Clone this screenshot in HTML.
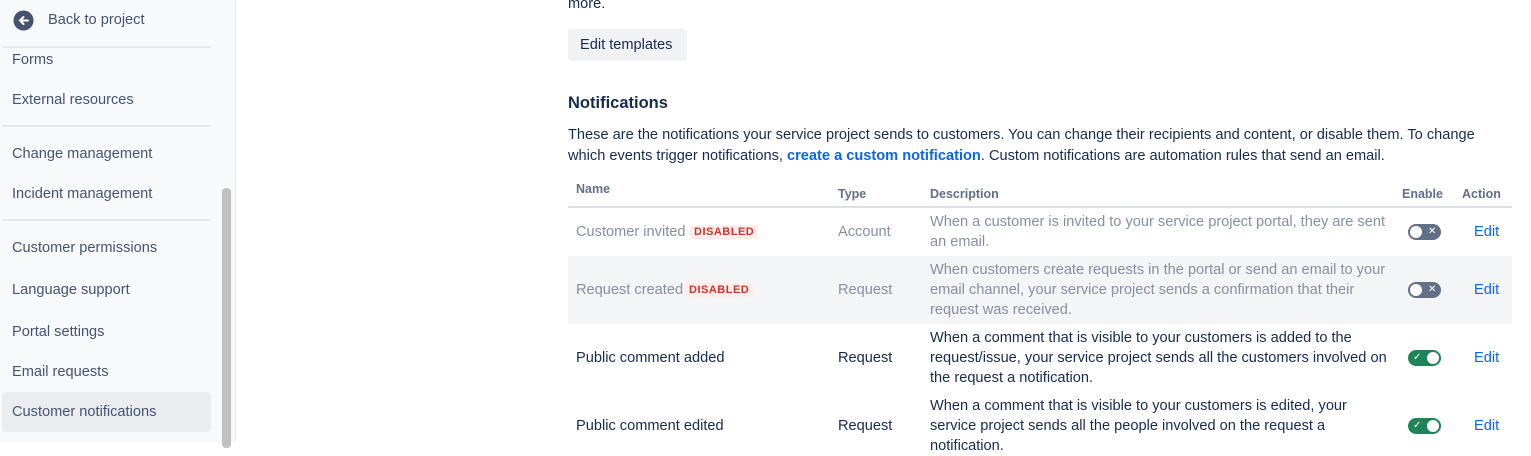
<!DOCTYPE html>
<html><head><style>
*{margin:0;padding:0;box-sizing:border-box}
body{width:1531px;height:441px;overflow:hidden;background:#fff;font-family:"Liberation Sans",sans-serif;font-size:14.6px;color:#172b4d;position:relative}
.w{position:absolute;left:0;top:1px;width:1531px;height:441px}
.sb{position:absolute;left:0;top:-1px;width:236px;height:442px;background:#f8f9fb;border-right:1px solid #e4e6ea}
.it{position:absolute;left:12px;color:#44546f;top:0}
.sep{position:absolute;left:2px;width:209px;height:2px;background:#e8e9ec}
.sel{position:absolute;left:2px;top:392px;width:209px;height:40px;background:#ebecf0;border-radius:3px}
.scr{position:absolute;left:222px;top:188px;width:9px;height:260px;background:#c1c1c1;border-radius:4px}
.m{position:absolute;left:568px}
.desc{position:absolute;left:930px;width:462px;line-height:20px}
.tg{position:absolute;left:1408px;width:33px;height:16px;border-radius:8px}
.tg i{position:absolute;top:2px;width:12px;height:12px;border-radius:50%;background:#fff}
.tg span{position:absolute;top:0;line-height:16px;color:#fff;font-size:10px}
.ed{position:absolute;left:1474px;color:#0c66e4}
.lz{position:absolute;font-size:11px;font-weight:bold;color:#c9372c;background:#ffeceb;padding:1px 4px;border-radius:3px;letter-spacing:.5px}
</style></head><body><div class="w">
<div class="sb">
<svg style="position:absolute;left:13px;top:10px" width="21" height="21" viewBox="0 0 21 21"><circle cx="10.5" cy="10.5" r="10" fill="#44546f"/><path d="M15 10.5H7M10.5 7l-3.5 3.5 3.5 3.5" stroke="#fff" stroke-width="2" fill="none" stroke-linecap="round"/></svg>
<div class="it" style="left:48px;top:12px">Back to project</div>
<div class="sep" style="top:46px"></div>
<div class="it" style="top:52px">Forms</div>
<div class="it" style="top:92px">External resources</div>
<div class="sep" style="top:125px"></div>
<div class="it" style="top:146px">Change management</div>
<div class="it" style="top:186px">Incident management</div>
<div class="sep" style="top:219px"></div>
<div class="it" style="top:240px">Customer permissions</div>
<div class="it" style="top:282px">Language support</div>
<div class="it" style="top:324px">Portal settings</div>
<div class="it" style="top:364px">Email requests</div>
<div class="sel"></div>
<div class="it" style="top:404px">Customer notifications</div>
<div class="scr"></div>
</div>
<div class="m" style="top:-5px">more.</div>
<div class="m" style="top:28px;width:119px;height:32px;background:#f1f2f4;border-radius:3px;padding:8px 12px;font-weight:500">Edit templates</div>
<div class="m" style="top:93px;font-size:16.5px;font-weight:bold">Notifications</div>
<div class="m" style="top:124px;width:944px;line-height:21px">These are the notifications your service project sends to customers. You can change their recipients and content, or disable them. To change which events trigger notifications, <b style="color:#0c66e4">create a custom notification</b>. Custom notifications are automation rules that send an email.</div>
<div style="position:absolute;left:568px;top:205px;width:944px;height:2px;background:#dcdfe4"></div>
<div style="position:absolute;left:576px;top:181px;font-size:12.5px;font-weight:bold;color:#626f86">Name</div>
<div style="position:absolute;left:838px;top:186px;font-size:12.5px;font-weight:bold;color:#626f86">Type</div>
<div style="position:absolute;left:930px;top:186px;font-size:12.5px;font-weight:bold;color:#626f86">Description</div>
<div style="position:absolute;left:1402px;top:186px;font-size:12.5px;font-weight:bold;color:#626f86">Enable</div>
<div style="position:absolute;left:1462px;top:186px;font-size:12.5px;font-weight:bold;color:#626f86">Action</div>
<div style="position:absolute;left:568px;top:255px;width:944px;height:68px;background:#f4f5f7"></div>
<div style="position:absolute;left:576px;top:223px;color:#8590a2">Customer invited</div>
<div class="lz" style="left:690px;top:224px">DISABLED</div>
<div style="position:absolute;left:838px;top:223px;color:#8590a2">Account</div>
<div class="desc" style="top:211px;color:#8590a2">When a customer is invited to your service project portal, they are sent an email.</div>
<div class="tg" style="top:223px;background:#626f86"><i style="left:2px"></i><span style="left:20px">✕</span></div>
<div class="ed" style="top:223px">Edit</div>
<div style="position:absolute;left:576px;top:281px;color:#8590a2">Request created</div>
<div class="lz" style="left:685px;top:282px">DISABLED</div>
<div style="position:absolute;left:838px;top:281px;color:#8590a2">Request</div>
<div class="desc" style="top:259px;color:#8590a2">When customers create requests in the portal or send an email to your email channel, your service project sends a confirmation that their request was received.</div>
<div class="tg" style="top:281px;background:#626f86"><i style="left:2px"></i><span style="left:20px">✕</span></div>
<div class="ed" style="top:281px">Edit</div>
<div style="position:absolute;left:576px;top:349px">Public comment added</div>
<div style="position:absolute;left:838px;top:349px">Request</div>
<div class="desc" style="top:327px">When a comment that is visible to your customers is added to the request/issue, your service project sends all the customers involved on the request a notification.</div>
<div class="tg" style="top:349px;background:#1f845a"><i style="left:19px"></i><span style="left:5px">✓</span></div>
<div class="ed" style="top:349px">Edit</div>
<div style="position:absolute;left:576px;top:417px">Public comment edited</div>
<div style="position:absolute;left:838px;top:417px">Request</div>
<div class="desc" style="top:395px">When a comment that is visible to your customers is edited, your service project sends all the people involved on the request a notification.</div>
<div class="tg" style="top:417px;background:#1f845a"><i style="left:19px"></i><span style="left:5px">✓</span></div>
<div class="ed" style="top:417px">Edit</div>
</div></body></html>
